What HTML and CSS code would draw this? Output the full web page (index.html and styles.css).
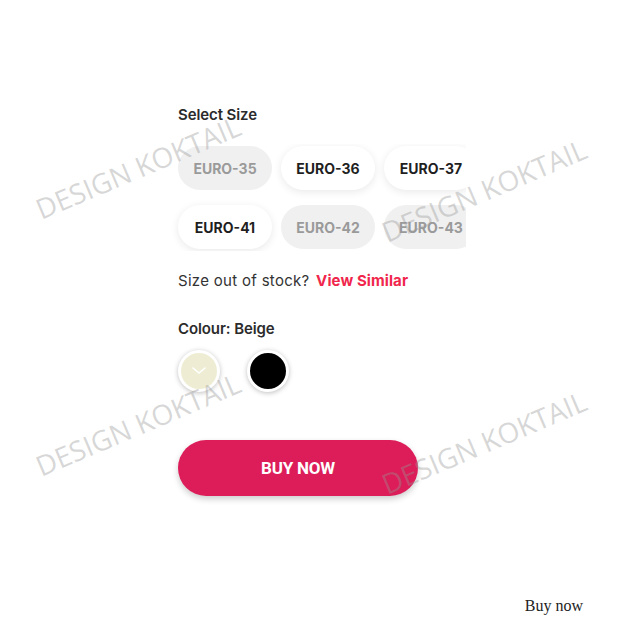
FILE: index.html
```html
<!DOCTYPE html>
<html lang="en">
<head>
    <meta charset="UTF-8">
    <meta name="viewport" content="width=device-width, initial-scale=1.0">
    <title>Select Size</title>
    <link rel="stylesheet" href="styles.css">
</head>
<body>
    <div class="product">
        <h4 class="label">Select Size</h4>
        <div class="sizes">
            <div class="size-row">
                <span class="chip disabled">EURO-35</span>
                <span class="chip">EURO-36</span>
                <span class="chip">EURO-37</span>
            </div>
            <div class="size-row">
                <span class="chip">EURO-41</span>
                <span class="chip disabled">EURO-42</span>
                <span class="chip disabled">EURO-43</span>
            </div>
        </div>

        <p class="stock">Size out of stock? <a href="#" class="similar">View Similar</a></p>

        <h4 class="label colour-label">Colour: Beige</h4>
        <div class="swatches">
            <span class="swatch beige selected">
                <svg width="16" height="10" viewBox="0 0 16 10"><path d="M2 2 L8 7 L14 2" fill="none" stroke="#fff" stroke-width="1.6" stroke-linecap="round"/></svg>
            </span>
            <span class="swatch black"></span>
        </div>

        <button class="buy">BUY NOW</button>
    </div>

    <div class="footer">Buy now</div>

    <div class="watermark wm1">DESIGN KOKTAIL</div>
    <div class="watermark wm2">DESIGN KOKTAIL</div>
    <div class="watermark wm3">DESIGN KOKTAIL</div>
    <div class="watermark wm4">DESIGN KOKTAIL</div>
</body>
</html>
```

FILE: styles.css
```css
body {
    margin: 0;
    height: 624px;
    display: flex;
    flex-direction: column;
    background: #fff;
    font-family: Inter, Roboto, sans-serif;
    color: #333;
    position: relative;
    overflow: hidden;
}
.product {
    padding: 106px 0 0 178px;
}
.label {
    margin: 0;
    font-size: 15px;
    font-weight: 600;
    color: #2b2b2b;
    line-height: 18px;
    letter-spacing: -0.1px;
}
.sizes {
    width: 288px;
    margin: 20px 0 0 -10px;
    padding: 2px 0 2px 10px;
    overflow: hidden;
    display: flex;
    flex-direction: column;
    gap: 15px;
}
.size-row {
    display: flex;
    gap: 9px;
    width: 400px;
}
.chip {
    width: 94px;
    height: 44px;
    flex: none;
    border-radius: 22px;
    background: #fff;
    box-shadow: 0 2px 8px rgba(0, 0, 0, 0.09);
    display: flex;
    align-items: center;
    justify-content: center;
    font-size: 14px;
    font-weight: 700;
    color: #1f1f1f;
}
.chip.disabled {
    background: #f0f0f0;
    box-shadow: none;
    color: #9a9a9a;
}
.stock {
    margin: 21px 0 0;
    font-size: 15px;
    line-height: 18px;
    color: #333;
    letter-spacing: 0.3px;
}
.similar {
    color: #f0264c;
    font-weight: 700;
    text-decoration: none;
    margin-left: 2px;
    letter-spacing: 0.1px;
}
.colour-label {
    margin-top: 30px;
}
.swatches {
    display: flex;
    gap: 27px;
    margin-top: 12px;
}
.swatch {
    width: 36px;
    height: 36px;
    border-radius: 50%;
    border: 3px solid #fff;
    box-shadow: 0 1px 5px rgba(0, 0, 0, 0.25);
    display: flex;
    align-items: center;
    justify-content: center;
}
.beige {
    background: #eeedd4;
}
.black {
    background: #000;
}
.buy {
    margin-top: 48px;
    width: 240px;
    height: 56px;
    border: none;
    border-radius: 28px;
    background: #dc1d59;
    color: #fff;
    font-family: Roboto, sans-serif;
    font-size: 17px;
    font-weight: 700;
    letter-spacing: -0.2px;
    box-shadow: 0 3px 6px rgba(0, 0, 0, 0.2);
    cursor: pointer;
}
.footer {
    margin-top: auto;
    padding: 0 41px 9px 0;
    text-align: right;
    font-family: "Liberation Serif", serif;
    font-size: 16px;
    color: #222;
}
.watermark {
    position: absolute;
    font-family: "Open Sans", sans-serif;
    font-size: 28px;
    color: rgba(150, 150, 150, 0.38);
    white-space: nowrap;
    transform: translate(-50%, -50%) rotate(-23deg);
    pointer-events: none;
}
.wm1 { left: 138px; top: 167px; }
.wm2 { left: 484px; top: 190px; }
.wm3 { left: 138px; top: 424px; }
.wm4 { left: 484px; top: 442px; }
```
